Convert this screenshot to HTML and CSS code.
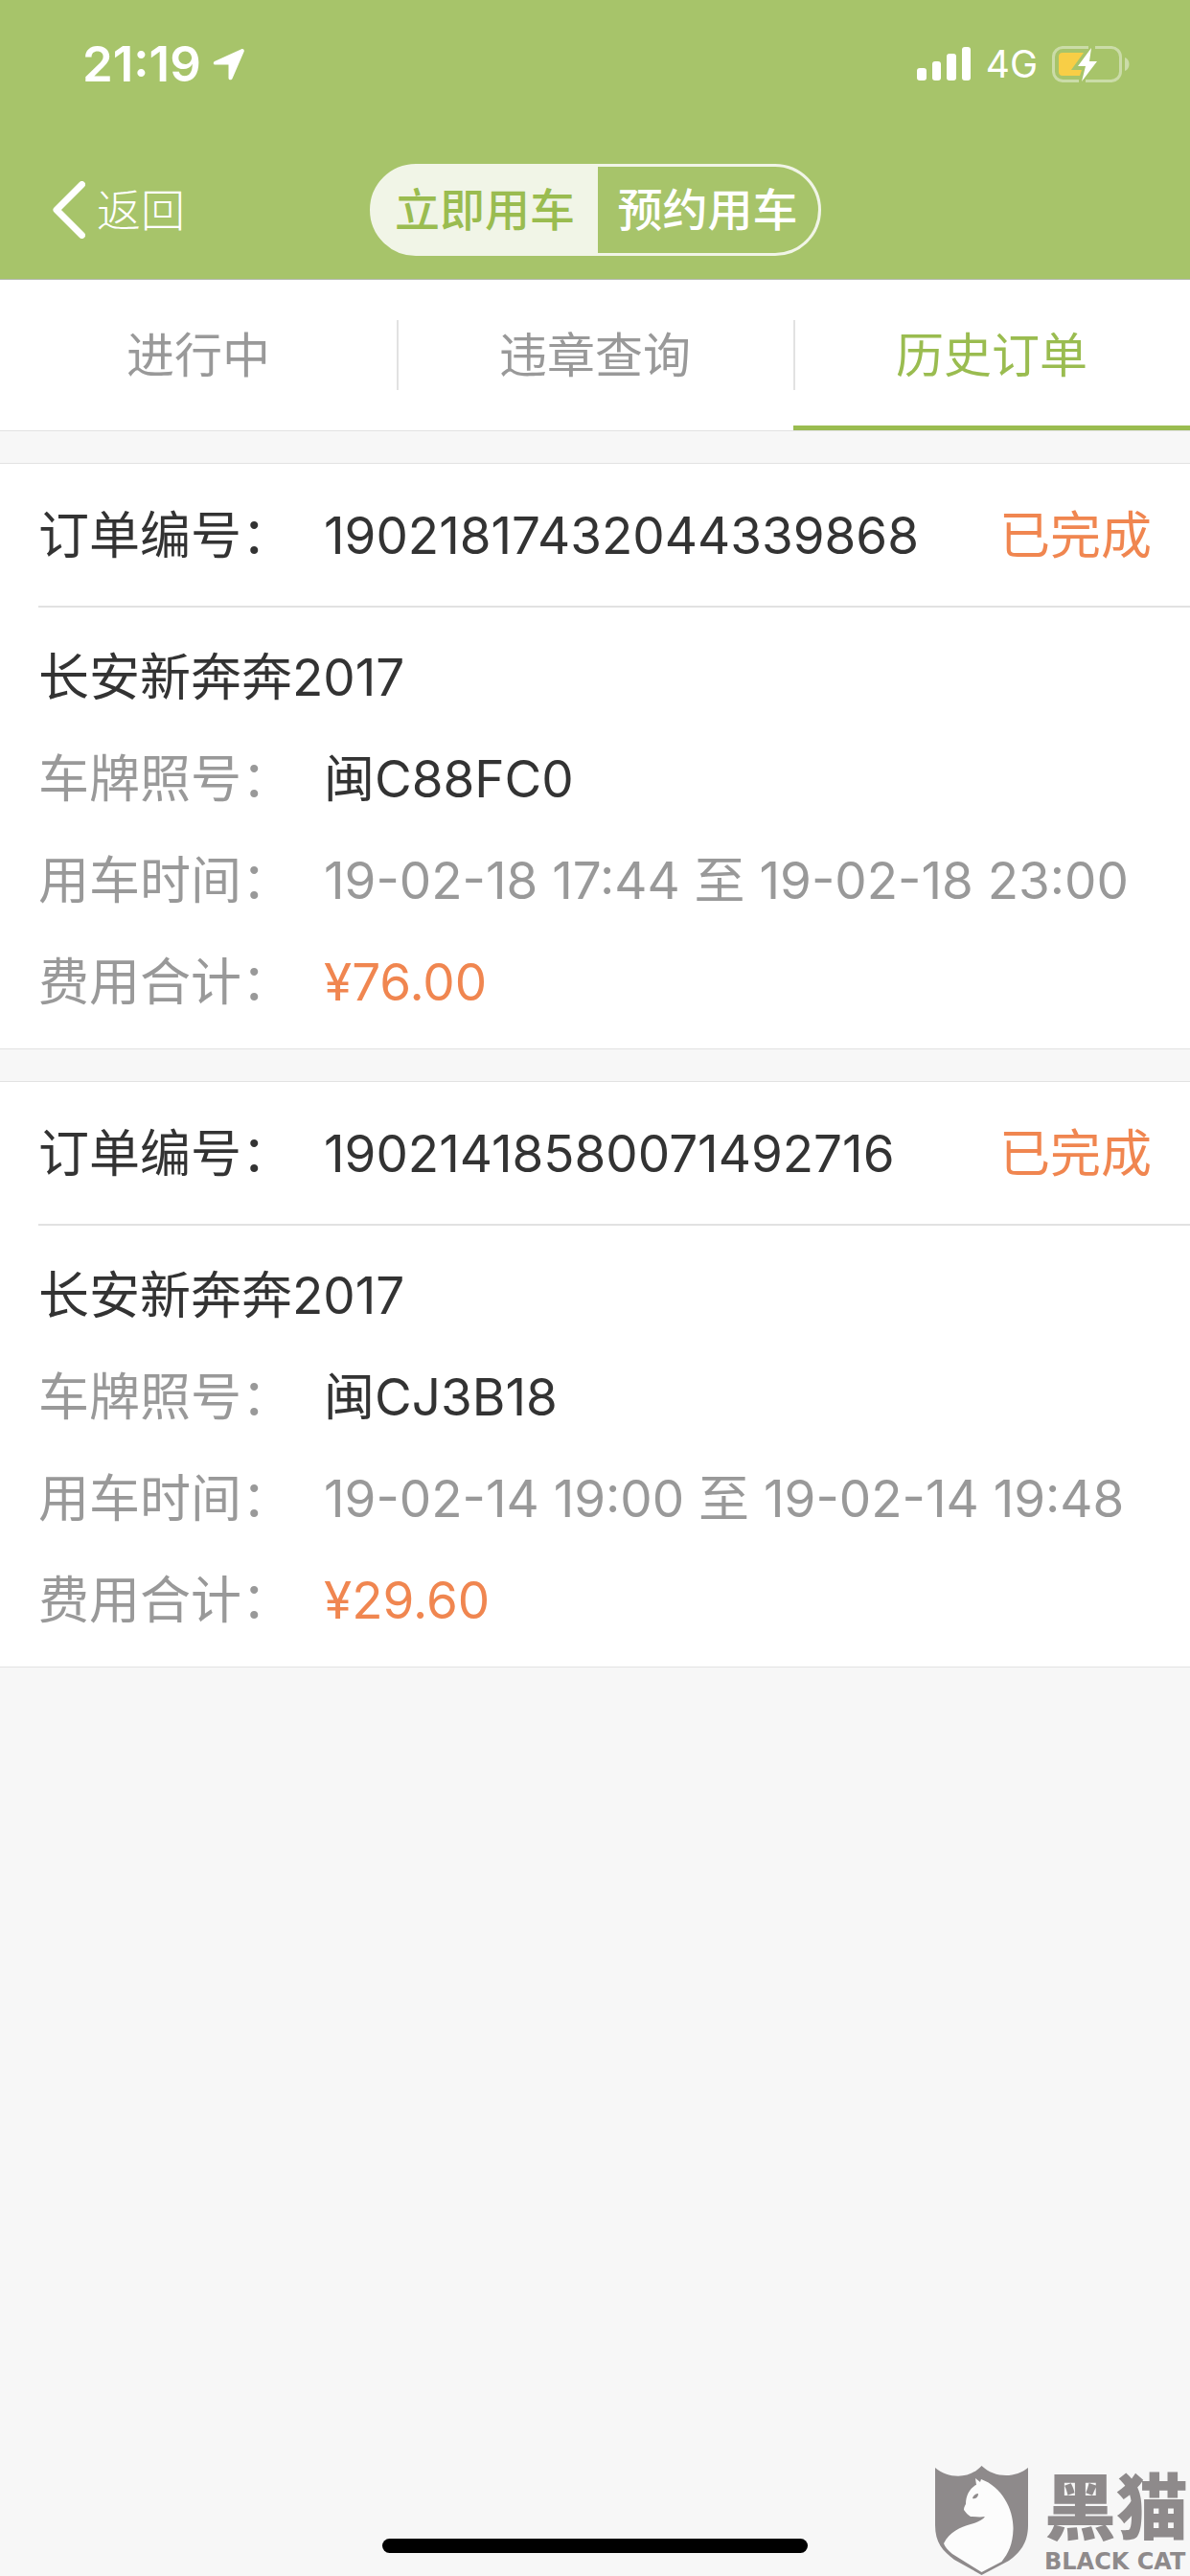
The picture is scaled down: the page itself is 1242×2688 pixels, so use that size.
FILE: index.html
```html
<!DOCTYPE html>
<html lang="zh-CN">

<head>
    <meta charset="UTF-8">
    <meta name="viewport" content="width=device-width, initial-scale=1.0">
    <title>历史订单</title>
    <link rel="stylesheet" href="styles.css">
</head>

<body>
    <header class="header">
        <div class="status-bar">
            <div class="status-left">
                <span class="time">21:19</span>
                <svg class="icon-location" viewBox="0 0 34 34"><path d="M3 13.5 30 1.2c1.700-.8 3.300.6 2.700 2.600L20.500 32c-.8 2-4 1.600-4-.6V17.500H3C.3 17.500-.2 14.800 3 13.500z"/></svg>
            </div>
            <div class="status-right">
                <svg class="icon-signal" viewBox="0 0 57 36"><rect x="0" y="22" width="10" height="13" rx="3"/><rect x="16" y="15" width="9" height="20" rx="3"/><rect x="31" y="7" width="10" height="28" rx="3"/><rect x="47" y="0" width="9" height="35" rx="3"/></svg>
                <span class="network">4G</span>
                <svg class="icon-battery" viewBox="0 0 82 38">
                    <path class="battery-shell" d="M27 1.500H12A10 10 0 0 0 1.500 12v14A10 10 0 0 0 12 36.500h16M45 1.500h16A10 10 0 0 1 71.500 12v14A10 10 0 0 1 61 36.500H35M27 1.500h11"/>
                    <path class="battery-head" d="M76 12c6 2 6 12 0 14z"/>
                    <path class="battery-level" d="M11 7h22L20 25h11l-2 6H11a4 4 0 0 1-4-4V11a4 4 0 0 1 4-4z"/>
                    <path class="battery-bolt" d="M41 2 27 21h8l-4 16 16-21h-8z"/>
                </svg>
            </div>
        </div>
        <div class="nav-bar">
            <a class="back" href="#">
                <svg class="icon-back" viewBox="0 0 34 60"><path d="M30.500 3.500 4 30l26.500 26.500"/></svg>
                <span>返回</span>
            </a>
            <div class="switch">
                <button type="button" class="switch-item active">立即用车</button>
                <button type="button" class="switch-item">预约用车</button>
            </div>
        </div>
    </header>

    <nav class="tabs">
        <a class="tab" href="#">进行中</a>
        <a class="tab" href="#">违章查询</a>
        <a class="tab active" href="#">历史订单</a>
    </nav>

    <main class="order-list">
        <section class="order">
            <div class="order-head">
                <span class="label">订单编号：</span>
                <span class="order-no">19021817432044339868</span>
                <span class="order-status">已完成</span>
            </div>
            <div class="order-body">
                <h2 class="car-name">长安新奔奔2017</h2>
                <dl class="row"><dt class="label">车牌照号：</dt><dd class="plate">闽C88FC0</dd></dl>
                <dl class="row"><dt class="label">用车时间：</dt><dd>19-02-18 17:44 至 19-02-18 23:00</dd></dl>
                <dl class="row"><dt class="label">费用合计：</dt><dd class="price">¥76.00</dd></dl>
            </div>
        </section>

        <section class="order">
            <div class="order-head">
                <span class="label">订单编号：</span>
                <span class="order-no">19021418580071492716</span>
                <span class="order-status">已完成</span>
            </div>
            <div class="order-body">
                <h2 class="car-name">长安新奔奔2017</h2>
                <dl class="row"><dt class="label">车牌照号：</dt><dd class="plate">闽CJ3B18</dd></dl>
                <dl class="row"><dt class="label">用车时间：</dt><dd>19-02-14 19:00 至 19-02-14 19:48</dd></dl>
                <dl class="row"><dt class="label">费用合计：</dt><dd class="price">¥29.60</dd></dl>
            </div>
        </section>
    </main>

    <footer class="footer">
        <div class="home-indicator"></div>
        <!-- 右下角水印 -->
        <div class="watermark">
            <svg class="icon-cat" viewBox="0 0 97 114">
                <path class="shield" d="M0 2c13 11 35 13 48.500-2C62 13 84 13 97 2v60c0 19-9 29-20 37l-28.500 15L20 98C8 89 0 80 0 62z"/>
                <path class="cat" d="M43 20 42 13l5 4 1-3c22 8 34 32 33.500 52-.5 16-5 25-12 34L48.500 111 18 92c-5-4-8-8-9-11 6-12 17-17 28-20 8-2 13-5 15-8-5 1-11 0-15 0-3-2-5-4-7-7 0-3 1-4 2-6 0-9 4-16 10.500-20z"/>
                <path class="shield" d="M39 34c1-3 3-5 6-5 0 3-2 6-6 5z"/>
            </svg>
            <div class="watermark-text">
                <span class="watermark-cn">黑猫</span>
                <span class="watermark-en">BLACK CAT</span>
            </div>
        </div>
    </footer>
</body>

</html>
```
FILE: styles.css
```css
* {
    box-sizing: border-box;
}

body {
    margin: 0;
    min-height: 100vh;
    display: flex;
    flex-direction: column;
    position: relative;
    background: #f7f7f7;
    color: #333;
    font-family: Inter, "Noto Sans CJK SC", sans-serif;
    font-size: 53px;
}

a {
    color: inherit;
    text-decoration: none;
}

/* 顶部 */
.header {
    background: #a7c46a;
    color: #fff;
    border-bottom: 1px solid #b2b8ac;
}

.status-bar {
    height: 133px;
    padding: 0 62px 0 86px;
    display: flex;
    justify-content: space-between;
    align-items: center;
}

.status-left,
.status-right {
    display: flex;
    align-items: center;
}

.status-left {
    gap: 12px;
}

.status-right {
    gap: 15px;
}

.time {
    font-size: 51px;
    font-weight: 600;
}

.network {
    font-size: 39px;
}

.icon-location {
    width: 34px;
    height: 34px;
    fill: #fff;
}

.icon-signal {
    width: 57px;
    height: 36px;
    fill: #fff;
}

.icon-battery {
    width: 82px;
    height: 38px;
}

.battery-shell {
    fill: none;
    stroke: #cbdca8;
    stroke-width: 3;
}

.battery-head {
    fill: #cbdca8;
}

.battery-level {
    fill: #f8ce46;
}

.battery-bolt {
    fill: #fff;
    stroke: #a7c46a;
    stroke-width: 3;
    paint-order: stroke;
}

.nav-bar {
    height: 158px;
    padding: 14px 55px 0;
    display: grid;
    grid-template-columns: 1fr auto 1fr;
    align-items: center;
}

.back {
    display: flex;
    align-items: center;
    gap: 12px;
    font-size: 46px;
    font-weight: 300;
    line-height: 90px;
}

.icon-back {
    width: 34px;
    height: 60px;
    fill: none;
    stroke: #fff;
    stroke-width: 7;
    stroke-linecap: round;
    stroke-linejoin: round;
}

.switch {
    display: flex;
    height: 96px;
    border: 3px solid #f1f5e7;
    border-radius: 48px;
    background: #f1f5e7;
    overflow: hidden;
}

.switch-item {
    width: 230px;
    padding: 0;
    border: 0;
    background: #a7c46a;
    color: #fff;
    font-family: inherit;
    font-size: 47px;
    font-weight: 500;
    line-height: 90px;
}

.switch-item.active {
    width: 235px;
    background: #f1f5e7;
    color: #9abc50;
}

/* 标签页 */
.tabs {
    display: flex;
    background: #fff;
    border-bottom: 1px solid #e2e2e2;
}

.tab {
    flex: 1;
    position: relative;
    padding-top: 2px;
    color: #999;
    font-size: 50px;
    line-height: 155px;
    text-align: center;
}

.tab + .tab::before {
    content: "";
    position: absolute;
    left: 0;
    top: 42px;
    width: 2px;
    height: 73px;
    background: #e2e2e2;
}

.tab.active {
    color: #9abc50;
}

.tab.active::after {
    content: "";
    position: absolute;
    left: 0;
    right: 0;
    bottom: 0;
    height: 5px;
    background: #9abc50;
}

/* 订单列表 */
.order {
    margin-top: 33px;
    background: #fff;
    border-top: 1px solid #e2e2e2;
    border-bottom: 1px solid #e2e2e2;
}

.order-head {
    margin-left: 40px;
    padding: 2px 40px 0 0;
    display: flex;
    line-height: 146px;
    border-bottom: 2px solid #e2e2e2;
}

.label {
    width: 298px;
}

.order-status {
    margin-left: auto;
    color: #f08650;
}

.order-body {
    padding: 20px 40px 16px;
    line-height: 106px;
}

.car-name {
    margin: 0;
    font-size: 53px;
    font-weight: 400;
}

.row {
    display: flex;
    margin: 0;
    color: #999;
}

.row dd {
    margin: 0;
}

.row .plate {
    color: #333;
}

.row .price {
    color: #f08650;
}

/* 底部 */
.footer {
    margin-top: auto;
    padding-bottom: 24px;
}

.home-indicator {
    width: 444px;
    height: 15px;
    margin: 0 auto;
    border-radius: 8px;
    background: #000;
}

.watermark {
    position: absolute;
    right: 2px;
    bottom: 1px;
    display: flex;
    gap: 17px;
    color: #8e8a8b;
}

.icon-cat {
    width: 97px;
    height: 114px;
}

.shield {
    fill: #8e8a8b;
}

.cat {
    fill: #fcfcfc;
}

.watermark-text {
    display: flex;
    flex-direction: column;
    justify-content: flex-end;
}

.watermark-cn {
    margin-bottom: 10px;
    font-family: "Noto Sans CJK SC", sans-serif;
    font-size: 75px;
    font-weight: 900;
    line-height: 75px;
}

.watermark-en {
    font-family: "DejaVu Sans", sans-serif;
    font-size: 24px;
    font-weight: 700;
    line-height: 28px;
    white-space: nowrap;
}
```
